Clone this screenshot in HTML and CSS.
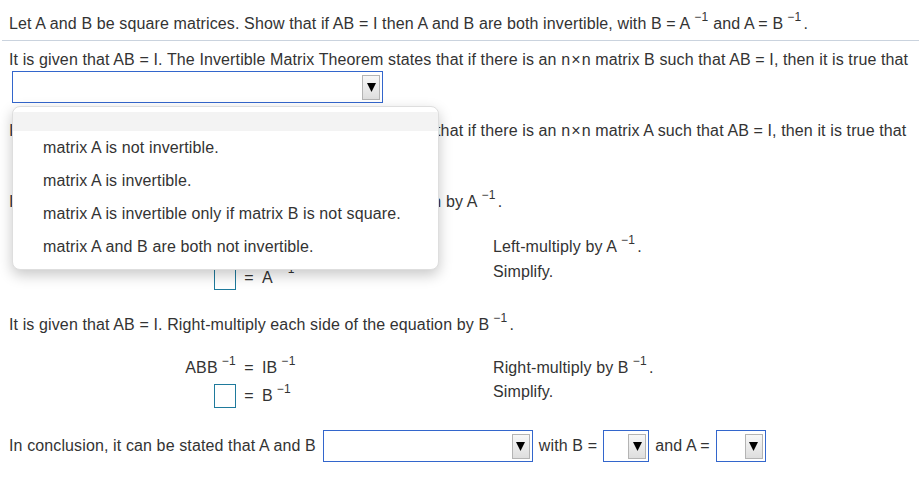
FILE: index.html
```html
<!DOCTYPE html>
<html lang="en">
<head>
<meta charset="utf-8">
<title>Invertible matrices</title>
<link rel="stylesheet" href="styles.css">
</head>
<body>
<main class="page">
  <p class="intro">Let A and B be square matrices. Show that if AB = I then A and B are both invertible, with B = A<span class="sup">−1</span> and A = B<span class="sup">−1</span><span class="dot">.</span></p>
  <div class="rule"></div>

  <section class="part">
    <p class="line">It is given that AB = I. The Invertible Matrix Theorem states that if there is an n<span class="times">×</span>n matrix B such that AB = I, then it is true that</p>
    <div class="select select-long"><span class="select-btn"><svg class="tri" width="9" height="9" viewBox="0 0 9 9"><polygon points="0,0 9,0 4.5,9"/></svg></span></div>
  </section>

  <section class="part">
    <p class="line">It is given that AB = I. The Invertible Matrix Theorem states that if there is an n<span class="times">×</span>n matrix A such that AB = I, then it is true that</p>
    <div class="select select-long"><span class="select-btn"><svg class="tri" width="9" height="9" viewBox="0 0 9 9"><polygon points="0,0 9,0 4.5,9"/></svg></span></div>
  </section>

  <section class="step step-first">
    <p class="line">It is given that AB = I. Left-multiply each side of the equation by A<span class="sup">−1</span><span class="dot">.</span></p>
    <div class="work">
      <div class="eq eq-first">
        <div class="lhs">A<span class="sup">−1</span>AB</div><div class="op">=</div><div class="rhs">A<span class="sup">−1</span>I</div>
        <div class="lhs"><span class="box"></span></div><div class="op">=</div><div class="rhs">A<span class="sup sup-wide">−1</span></div>
      </div>
      <div class="notes notes-first">
        <div>Left-multiply by A<span class="sup">−1</span><span class="dot">.</span></div>
        <div>Simplify.</div>
      </div>
    </div>
  </section>

  <section class="step step-second">
    <p class="line">It is given that AB = I. Right-multiply each side of the equation by B<span class="sup">−1</span><span class="dot">.</span></p>
    <div class="work">
      <div class="eq">
        <div class="lhs">ABB<span class="sup">−1</span></div><div class="op">=</div><div class="rhs">IB<span class="sup">−1</span></div>
        <div class="lhs"><span class="box"></span></div><div class="op">=</div><div class="rhs">B<span class="sup">−1</span></div>
      </div>
      <div class="notes">
        <div>Right-multiply by B<span class="sup">−1</span><span class="dot">.</span></div>
        <div>Simplify.</div>
      </div>
    </div>
  </section>

  <div class="conclusion">
    <span>In conclusion, it can be stated that A and B</span>
    <div class="select select-wide"><span class="select-btn"><svg class="tri" width="9" height="9" viewBox="0 0 9 9"><polygon points="0,0 9,0 4.5,9"/></svg></span></div>
    <span>with B =</span>
    <div class="select select-b"><span class="select-btn"><svg class="tri" width="9" height="9" viewBox="0 0 9 9"><polygon points="0,0 9,0 4.5,9"/></svg></span></div>
    <span>and A =</span>
    <div class="select select-a"><span class="select-btn"><svg class="tri" width="9" height="9" viewBox="0 0 9 9"><polygon points="0,0 9,0 4.5,9"/></svg></span></div>
  </div>
</main>

<ul class="menu">
  <li class="menu-blank"></li>
  <li class="menu-item">matrix A is not invertible.</li>
  <li class="menu-item">matrix A is invertible.</li>
  <li class="menu-item">matrix A is invertible only if matrix B is not square.</li>
  <li class="menu-item">matrix A and B are both not invertible.</li>
</ul>
</body>
</html>
```

FILE: styles.css
```css
html, body {
  margin: 0;
  padding: 0;
  background: #ffffff;
}

body {
  font-family: "Liberation Sans", Arial, sans-serif;
  font-size: 16px;
  line-height: 20px;
  letter-spacing: 0.12px;
  color: #333333;
}

.page {
  padding: 14px 0 0 9px;
}

p {
  margin: 0;
}

.intro {
  line-height: 20px;
}

.sup {
  font-size: 12px;
  line-height: 0;
  letter-spacing: 0.3px;
  vertical-align: 8px;
  margin-left: 4px;
}

.sup-wide {
  margin-left: 6px;
  letter-spacing: 2px;
  vertical-align: 10px;
}

.dot {
  margin-left: 2px;
}

.times {
  margin: 0 1px;
}

.rule {
  height: 1px;
  background: #cad3de;
  margin: 6px 0 0 -7px;
}

.part {
  margin-top: 18px;
}

.part:first-of-type {
  margin-top: 9px;
}

.line {
  line-height: 20px;
  white-space: nowrap;
}

.select {
  box-sizing: border-box;
  height: 32px;
  border: 1px solid #3366cc;
  background: #ffffff;
  display: flex;
  justify-content: flex-end;
  align-items: center;
  padding-right: 2px;
}

.part .select {
  margin: 1px 0 0 3px;
}

.select-long {
  width: 371px;
}

.select-wide {
  width: 210px;
  margin-left: 1px;
}

.select-b {
  width: 46px;
}

.select-a {
  width: 50px;
}

.select-btn {
  box-sizing: border-box;
  width: 18px;
  height: 25px;
  border: 1px solid #b4b4b4;
  background: linear-gradient(#f7f7f7, #dedede);
  display: flex;
  align-items: center;
  justify-content: center;
}

.tri {
  display: block;
  fill: #000000;
}

.step-first {
  margin-top: 18px;
}

.step-second {
  margin-top: 23px;
}

.work {
  display: flex;
  align-items: flex-start;
  margin-top: 19px;
}

.eq {
  display: grid;
  grid-template-columns: 227px 26px 231px;
  grid-auto-rows: 28px;
  align-items: center;
}

.eq-first {
  grid-template-rows: 33px 28px;
}

.lhs {
  text-align: right;
  white-space: nowrap;
}

.op {
  text-align: center;
}

.rhs {
  white-space: nowrap;
}

.box {
  display: inline-block;
  vertical-align: middle;
  box-sizing: border-box;
  width: 22px;
  height: 24px;
  border: 1px solid #1f7a9c;
  background: #ffffff;
}

.notes {
  margin-top: 2px;
  line-height: 24px;
}

.notes-first {
  margin-top: 3px;
  line-height: 25px;
}

.conclusion {
  display: flex;
  align-items: center;
  gap: 6px;
  margin-top: 20px;
  white-space: nowrap;
}

.menu {
  position: absolute;
  top: 106px;
  left: 12px;
  width: 427px;
  box-sizing: border-box;
  margin: 0;
  padding: 5px 0 6px;
  list-style: none;
  background: #ffffff;
  border: 1px solid #dedede;
  border-radius: 8px;
  box-shadow: 0 5px 14px rgba(0, 0, 0, 0.22);
}

.menu-blank {
  height: 19px;
  background: #f3f3f3;
}

.menu-item {
  height: 33px;
  line-height: 33px;
  padding-left: 30px;
  white-space: nowrap;
}
```
